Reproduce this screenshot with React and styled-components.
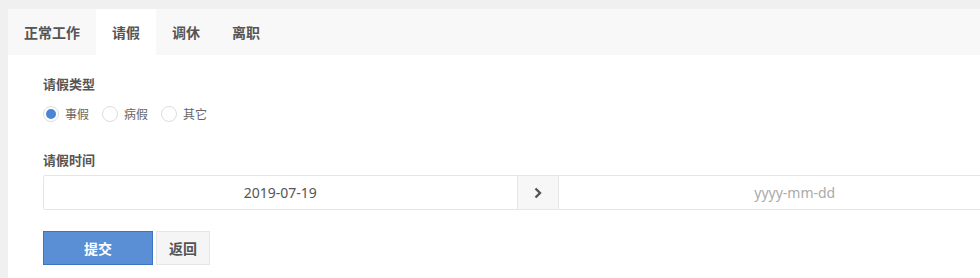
import React, { useState } from 'react';
import styled, { createGlobalStyle } from 'styled-components';

const GlobalStyle = createGlobalStyle`
  html, body {
    margin: 0;
    padding: 0;
    background: #f0f0f0;
    overflow: hidden;
  }
  body {
    font-family: "Noto Sans", "Noto Sans CJK SC", sans-serif;
    color: #555;
  }
`;

const Page = styled.div`
  padding: 9px 0 0 8px;
  height: 278px;
  box-sizing: border-box;
`;

const Card = styled.div`
  background: #fff;
  height: 100%;
`;

const TabBar = styled.div`
  display: flex;
  height: 46px;
  background: #f8f8f8;
`;

const Tab = styled.div`
  display: flex;
  align-items: center;
  padding: 0 16px;
  font-size: 14px;
  font-weight: 700;
  color: #555;
  background: ${(p) => (p.$active ? '#fff' : 'transparent')};
  cursor: pointer;
`;

const Body = styled.div`
  padding: 20px 0 0 35px;
`;

const Label = styled.div`
  font-size: 13px;
  font-weight: 700;
  color: #555;
  line-height: 18px;
  margin-bottom: ${(p) => p.$gap || 12}px;
`;

const RadioRow = styled.div`
  display: flex;
  align-items: center;
  gap: 13px;
  margin-bottom: 28px;
`;

const RadioItem = styled.label`
  display: flex;
  align-items: center;
  gap: 6px;
  font-size: 12px;
  color: #666;
  cursor: pointer;
`;

const Circle = styled.span`
  width: 14px;
  height: 14px;
  border: 1px solid #ddd;
  border-radius: 50%;
  display: flex;
  align-items: center;
  justify-content: center;
  background: #fff;
  &::after {
    content: '';
    width: 10px;
    height: 10px;
    border-radius: 50%;
    background: ${(p) => (p.$checked ? '#4a86d6' : 'transparent')};
  }
`;

const DateGroup = styled.div`
  display: flex;
  width: 989px;
  height: 35px;
  border: 1px solid #e6e6e6;
  border-radius: 2px;
  box-sizing: border-box;
  margin-bottom: 21px;
`;

const DateInput = styled.div`
  flex: 1;
  display: flex;
  align-items: center;
  justify-content: center;
  font-size: 14px;
  color: ${(p) => (p.$placeholder ? '#aaa' : '#555')};
`;

const Addon = styled.div`
  width: 40px;
  display: flex;
  align-items: center;
  justify-content: center;
  background: #f7f7f7;
  border-left: 1px solid #e6e6e6;
  border-right: 1px solid #e6e6e6;
  color: #555;
`;

const Actions = styled.div`
  display: flex;
  gap: 3px;
`;

const Button = styled.button`
  height: 34px;
  padding: 0;
  width: ${(p) => (p.$primary ? 110 : 54)}px;
  font-family: inherit;
  font-size: 14px;
  font-weight: 700;
  border: 1px solid ${(p) => (p.$primary ? '#3a74c4' : '#e6e6e6')};
  background: ${(p) => (p.$primary ? '#5b8fd5' : '#f5f5f5')};
  color: ${(p) => (p.$primary ? '#fff' : '#555')};
  cursor: pointer;
`;

const tabs = ['正常工作', '请假', '调休', '离职'];
const types = ['事假', '病假', '其它'];

export default function App() {
  const [tab, setTab] = useState(1);
  const [type, setType] = useState(0);

  return (
    <>
      <GlobalStyle />
      <Page>
        <Card>
          <TabBar>
            {tabs.map((t, i) => (
              <Tab key={t} $active={i === tab} onClick={() => setTab(i)}>
                {t}
              </Tab>
            ))}
          </TabBar>
          <Body>
            <Label>请假类型</Label>
            <RadioRow>
              {types.map((t, i) => (
                <RadioItem key={t} onClick={() => setType(i)}>
                  <Circle $checked={i === type} />
                  {t}
                </RadioItem>
              ))}
            </RadioRow>
            <Label $gap={6}>请假时间</Label>
            <DateGroup>
              <DateInput>2019-07-19</DateInput>
              <Addon>
                <svg width="10" height="12" viewBox="0 0 10 12">
                  <path d="M2.5 1.5 L7 6 L2.5 10.5" fill="none" stroke="#555" strokeWidth="2.4" />
                </svg>
              </Addon>
              <DateInput $placeholder>yyyy-mm-dd</DateInput>
            </DateGroup>
            <Actions>
              <Button $primary>提交</Button>
              <Button>返回</Button>
            </Actions>
          </Body>
        </Card>
      </Page>
    </>
  );
}
